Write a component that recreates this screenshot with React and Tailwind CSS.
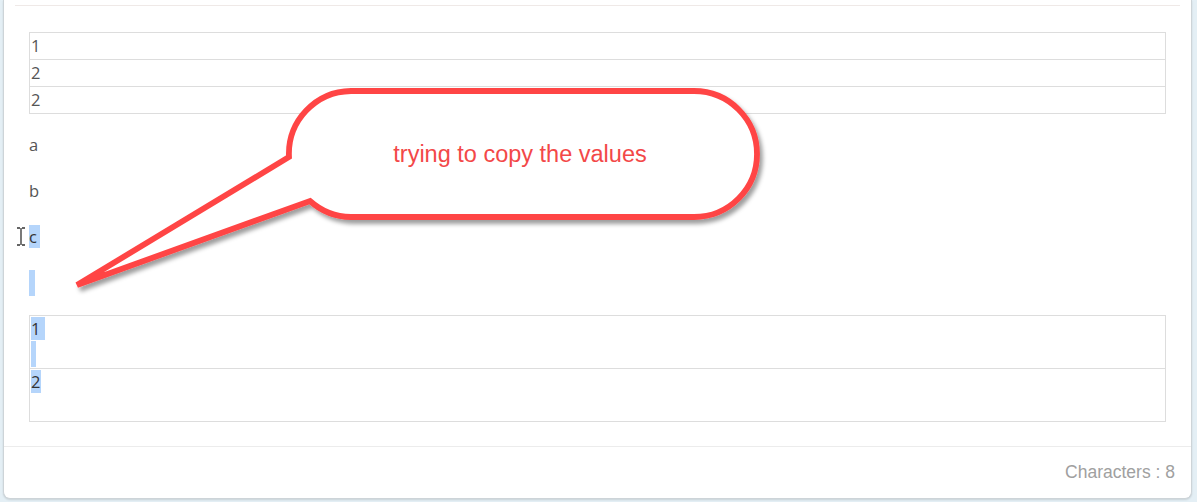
import React from 'react';

const sans = { fontFamily: '"Open Sans", "Noto Sans", sans-serif' };

function Sel({ children, className = '' }) {
  return <span className={`bg-[#b5d5fb] ${className}`}>{children}</span>;
}

function Callout() {
  return (
    <svg
      className="absolute left-0 top-0 pointer-events-none"
      width="1197"
      height="502"
      viewBox="0 0 1197 502"
    >
      <defs>
        <filter id="shadow" x="-10%" y="-10%" width="130%" height="140%">
          <feDropShadow dx="3" dy="4" stdDeviation="2.2" floodColor="#000" floodOpacity="0.38" />
        </filter>
      </defs>
      <path
        d="M289 157 A63 63 0 0 1 351 91 L694 91 A63 63 0 0 1 694 217 L351 217 A63 63 0 0 1 310 201 L77 285 Z"
        fill="#fff"
        stroke="#ff4545"
        strokeWidth="5.8"
        strokeLinejoin="miter"
        filter="url(#shadow)"
      />
      <text
        x="520"
        y="162"
        textAnchor="middle"
        fill="#f34848"
        fontSize="23.5"
        fontFamily='"Liberation Sans", Arial, sans-serif'
      >
        trying to copy the values
      </text>
    </svg>
  );
}

export default function App() {
  return (
    <div className="relative w-[1197px] h-[502px] overflow-hidden bg-[#e4eff5]">
      <div className="ml-[3px] w-[1189px] h-[499px] bg-white border-x border-b border-[#cdd4d8] rounded-b-[7px] shadow-[0_1px_2px_rgba(0,0,0,0.12)] flex flex-col">
        <div className="mx-[11px] mt-[5px] border-t border-[#efe9e7]" />

        <div className="relative flex-1 px-[25px] pt-[26px] text-[16.5px] text-[#555]" style={sans}>
          <table className="w-[1137px] border-collapse">
            <tbody>
              {['1', '2', '2'].map((v, i) => (
                <tr key={i}>
                  <td className="border border-[#ddd] h-[27px] px-px py-0 leading-[24px] align-middle">{v}</td>
                </tr>
              ))}
            </tbody>
          </table>

          <div className="mt-[18px] flex flex-col gap-[20px] leading-[26px]">
            <p>a</p>
            <p>b</p>
            <p className="relative">
              <span className="absolute left-[-13px] top-[3px] text-[#333]">
                <svg width="10" height="19" viewBox="0 0 10 19">
                  <path d="M1 1h3M6 1h3M5 1v17M1 18h3M6 18h3" stroke="#333" strokeWidth="1.3" fill="none" />
                </svg>
              </span>
              <Sel className="text-[#333] pr-[3px]">c</Sel>
            </p>
            <p className="h-[26px]">
              <Sel className="inline-block w-[6px] h-[26px] align-top" />
            </p>
          </div>

          <table className="mt-[19px] w-[1137px] border-collapse">
            <tbody>
              <tr>
                <td className="border border-[#ddd] h-[53px] px-px pt-[1px] pb-0 align-top leading-[24px]">
                  <Sel className="text-[#333] pr-[5px]">1</Sel>
                  <br />
                  <Sel className="inline-block w-[5px] h-[26px] align-top" />
                </td>
              </tr>
              <tr>
                <td className="border border-[#ddd] h-[53px] px-px pt-[1px] pb-0 align-top leading-[24px]">
                  <Sel className="text-[#333] pr-[1px]">2</Sel>
                </td>
              </tr>
            </tbody>
          </table>
        </div>

        <div className="h-[52px] border-t border-[#ececec] flex items-center justify-end pr-[16px]">
          <span
            className="text-[17.5px] text-[#a0a0a0]"
            style={{ fontFamily: '"Liberation Sans", Arial, sans-serif' }}
          >
            Characters : 8
          </span>
        </div>
      </div>

      <Callout />
    </div>
  );
}
